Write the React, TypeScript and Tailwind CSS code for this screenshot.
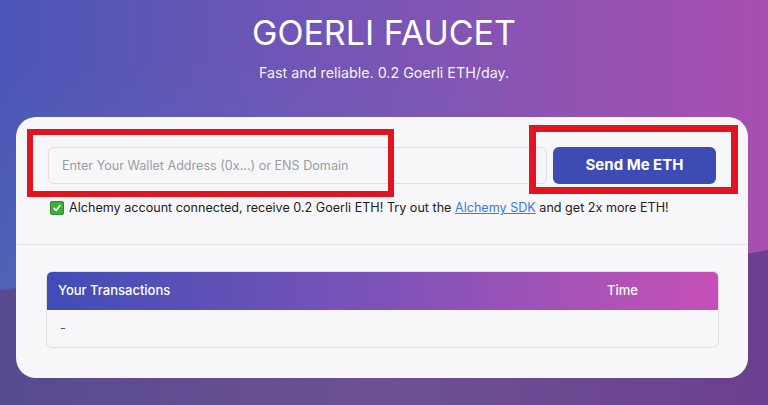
import React from 'react';

function CheckBox() {
  return (
    <span className="inline-flex h-[14px] w-[14px] items-center justify-center rounded-[2px] bg-[#3bb13b] border border-[#2a8a2a]">
      <svg viewBox="0 0 12 12" className="h-[10px] w-[10px]" fill="none" stroke="white" strokeWidth="2" strokeLinecap="round" strokeLinejoin="round">
        <path d="M2.5 6.5 L5 9 L9.5 3" />
      </svg>
    </span>
  );
}

export default function App() {
  return (
    <div
      className="relative h-[405px] w-full overflow-hidden bg-gradient-to-r from-[#4a56b8] via-[#7a55b4] to-[#a84fb1]"
      style={{ fontFamily: 'Inter, "Open Sans", sans-serif' }}
    >
      {/* background wave */}
      <svg className="absolute inset-0 h-full w-full" viewBox="0 0 768 405" preserveAspectRatio="none">
        <defs>
          <linearGradient id="fade" x1="0" y1="0" x2="0" y2="1">
            <stop offset="0" stopColor="#5a7ab4" stopOpacity="0" />
            <stop offset="1" stopColor="#5a7ab4" stopOpacity="0.35" />
          </linearGradient>
          <linearGradient id="wave" x1="0" y1="0" x2="1" y2="0">
            <stop offset="0" stopColor="#574a8e" />
            <stop offset="0.5" stopColor="#6d5194" />
            <stop offset="1" stopColor="#6b3f8f" />
          </linearGradient>
        </defs>
        <rect x="0" y="60" width="500" height="240" fill="url(#fade)" />
        <path d="M0 290 C 200 265, 500 300, 768 250 L 768 405 L 0 405 Z" fill="url(#wave)" />
      </svg>

      <div className="relative flex flex-col items-center">
        <h1 className="mt-[13px] text-[34px] font-normal leading-[40px] tracking-normal text-white">GOERLI FAUCET</h1>
        <p className="mt-[11px] text-[14.3px] leading-[18px] text-white/95">Fast and reliable. 0.2 Goerli ETH/day.</p>
      </div>

      <div className="relative ml-4 mr-5 mt-[35px] rounded-[20px] bg-[#f7f7f9]">
        <div className="px-[32px] pt-[30px] pb-[28px]">
          <div className="flex gap-[6px]">
            <div className="flex h-[37px] flex-1 items-center rounded-[6px] border border-[#dedfe3] bg-[#f7f7f9] px-[13px] pt-[2px] text-[12.6px] text-[#9a9ca3]">
              Enter Your Wallet Address (0x...) or ENS Domain
            </div>
            <button className="h-[37px] w-[163px] rounded-[6px] bg-[#3e4bb5] text-[15px] font-bold text-white">Send Me ETH</button>
          </div>
          <div className="mt-[16px] flex items-center gap-[5px] pl-[2px] text-[12.6px] leading-[16px] text-[#1f2024]">
            <CheckBox />
            <span>
              Alchemy account connected, receive 0.2 Goerli ETH! Try out the{' '}
              <a className="text-[#3b7bd6] underline">Alchemy SDK</a> and get 2x more ETH!
            </span>
          </div>
        </div>
        <div className="h-px bg-[#e3e4e8]" />
        <div className="pl-[30px] pr-[29px] pt-[26px] pb-[30px]">
          <div className="overflow-hidden rounded-[6px] border border-[#dedfe3]">
            <div className="flex h-[38px] items-center bg-gradient-to-r from-[#3e4db6] via-[#7d52b8] to-[#c64fb6] px-[11px] text-[13px] font-medium text-white">
              <span className="flex-1">Your Transactions</span>
              <span className="w-[100px]">Time</span>
            </div>
            <div className="flex h-[37px] items-center px-[13px] text-[13px] text-[#55575d]">-</div>
          </div>
        </div>
      </div>

      {/* annotation boxes */}
      <div className="absolute left-[27px] top-[129px] h-[68px] w-[367px] border-[6px] border-[#e2141f]" />
      <div className="absolute left-[529px] top-[125px] h-[69px] w-[209px] border-[7px] border-[#e2141f]" />
    </div>
  );
}
